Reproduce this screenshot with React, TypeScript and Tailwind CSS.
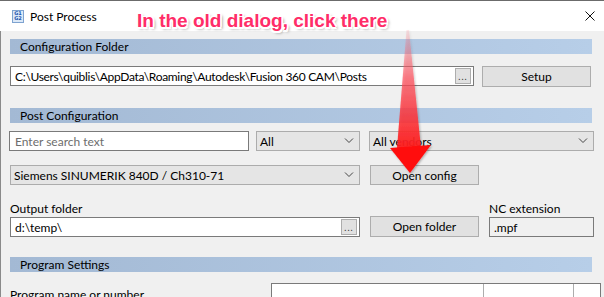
import React from "react";

const Chevron = () => (
  <svg width="10" height="6" viewBox="0 0 10 6" className="shrink-0">
    <path d="M1 0.5 L5 4.5 L9 0.5" fill="none" stroke="#444" strokeWidth="1" />
  </svg>
);

const Header = ({ title, mt }: { title: string; mt: string }) => (
  <div
    className={`${mt} h-[18px] w-[582px] flex items-center pl-[10px] bg-gradient-to-r from-[#a3b9d4] to-[#b7cee8] text-black`}
  >
    {title}
  </div>
);

const Dots = () => (
  <div className="w-[16px] h-[16px] mr-[2px] border border-[#adadad] bg-[#e1e1e1] flex items-end justify-center text-[9px] leading-[9px] pb-[2px] tracking-[1px] text-[#333]">
    ...
  </div>
);

export default function App() {
  return (
    <div className="relative w-[604px] h-[297px] overflow-hidden bg-[#f0f0f0] text-[12px] leading-[15px] text-black font-['Lato','Noto_Sans',sans-serif]">
      <div className="h-px bg-[#6b6b6b]" />
      {/* title bar */}
      <div className="h-[30px] bg-white flex items-center">
        <div className="ml-[12px] w-[12px] h-[13px] bg-[#dbe8f7] border border-[#7ea3d0] flex flex-col items-center justify-center text-[5px] leading-[5px] font-bold text-[#1e56b0] font-['DejaVu_Sans',sans-serif]">
          <span>G1</span>
          <span>G2</span>
        </div>
        <div className="ml-[6px] text-[12px] mt-[1px]">Post Process</div>
        <svg className="ml-auto mr-[9px]" width="10" height="10" viewBox="0 0 10 10">
          <path d="M0.5 0.5 L9.5 9.5 M9.5 0.5 L0.5 9.5" stroke="#111" strokeWidth="1" />
        </svg>
      </div>
      {/* body */}
      <div className="h-[266px] border-l border-[#8a8a8a] pl-[9px] flex flex-col">
        <Header title="Configuration Folder" mt="mt-[8px]" />
        <div className="mt-[12px] flex items-start">
          <div className="w-[464px] h-[20px] bg-white border border-[#7a7a7a] flex items-center pl-[4px]">
            <span className="flex-1 whitespace-nowrap overflow-hidden tracking-[-0.3px]">C:\Users\quiblis\AppData\Roaming\Autodesk\Fusion 360 CAM\Posts</span>
            <Dots />
          </div>
          <div className="ml-[8px] w-[109px] h-[21px] bg-[#e1e1e1] border border-[#adadad] flex items-center justify-center">Setup</div>
        </div>
        <Header title="Post Configuration" mt="mt-[21px]" />
        <div className="mt-[8px] -ml-px flex items-start">
          <div className="w-[240px] h-[20px] bg-white border border-[#7a7a7a] flex items-center pl-[5px] text-[#6d6d6d]">Enter search text</div>
          <div className="ml-[7px] w-[104px] h-[20px] bg-[#e5e5e5] border border-[#acacac] flex items-center pl-[3px] pr-[5px]">
            <span className="flex-1">All</span>
            <Chevron />
          </div>
          <div className="ml-[9px] w-[225px] h-[20px] bg-[#e5e5e5] border border-[#acacac] flex items-center pl-[3px] pr-[5px]">
            <span className="flex-1">All vendors</span>
            <Chevron />
          </div>
        </div>
        <div className="mt-[14px] flex items-start">
          <div className="w-[350px] h-[20px] bg-[#e5e5e5] border border-[#acacac] flex items-center pl-[3px] pr-[5px]">
            <span className="flex-1">Siemens SINUMERIK 840D / Ch310-71</span>
            <Chevron />
          </div>
          <div className="ml-[10px] w-[109px] h-[20px] bg-[#e1e1e1] border border-[#adadad] flex items-center justify-center">Open config</div>
        </div>
        <div className="mt-[16px] flex items-end">
          <div className="flex flex-col">
            <div className="h-[16px]">Output folder</div>
            <div className="w-[350px] h-[20px] bg-white border border-[#7a7a7a] flex items-center pl-[4px]">
              <span className="flex-1">d:\temp\</span>
              <Dots />
            </div>
          </div>
          <div className="ml-[10px] w-[109px] h-[21px] bg-[#e1e1e1] border border-[#adadad] flex items-center justify-center">Open folder</div>
          <div className="ml-[10px] flex flex-col">
            <div className="h-[16px]">NC extension</div>
            <div className="w-[105px] h-[20px] bg-[#f0f0f0] border border-[#7a7a7a] flex items-center pl-[4px]">.mpf</div>
          </div>
        </div>
        <Header title="Program Settings" mt="mt-[20px]" />
        <div className="mt-[11px] flex items-start">
          <div className="pt-[4px] w-[261px] whitespace-nowrap">Program name or number</div>
          <div className="w-[330px] h-[20px] border border-[#7a7a7a] bg-white flex">
            <div className="w-[212px] border-r border-[#adadad]" />
            <div className="w-[90px] border-r border-[#adadad]" />
          </div>
        </div>
      </div>

      {/* annotation text */}
      <div className="absolute left-[137px] top-[9px] text-[19px] leading-[24px] font-bold text-[#ff2d68] whitespace-nowrap font-['Liberation_Sans',Arial,sans-serif] [text-shadow:1.5px_0_0_#fff,-1.5px_0_0_#fff,0_1.5px_0_#fff,0_-1.5px_0_#fff,1.5px_1.5px_0_#fff,-1.5px_-1.5px_0_#fff,1.5px_-1.5px_0_#fff,-1.5px_1.5px_0_#fff,2px_2px_3px_rgba(0,0,0,0.5)]">
        In the old dialog, click there
      </div>

      {/* arrow */}
      <svg className="absolute left-0 top-0" width="604" height="297" viewBox="0 0 604 297">
        <defs>
          <linearGradient id="shaft" x1="0" y1="30" x2="0" y2="150" gradientUnits="userSpaceOnUse">
            <stop offset="0" stopColor="#ff7080" stopOpacity="0.15" />
            <stop offset="0.4" stopColor="#ff4f5c" stopOpacity="0.7" />
            <stop offset="1" stopColor="#ff1a1a" stopOpacity="0.95" />
          </linearGradient>
          <filter id="sh" x="-50%" y="-20%" width="200%" height="140%">
            <feDropShadow dx="1" dy="1" stdDeviation="1.2" floodColor="#000" floodOpacity="0.3" />
          </filter>
        </defs>
        <g filter="url(#sh)">
          <path d="M406.5 30 L409 30 L421 148 L397 148 Z" fill="url(#shaft)" />
          <path d="M390 148 L431 145 L410 173 Z" fill="#ff0d0d" />
        </g>
      </svg>
    </div>
  );
}
